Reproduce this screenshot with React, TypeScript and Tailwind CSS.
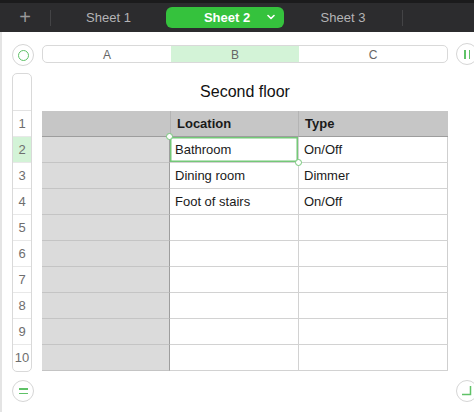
import React from 'react';

const rows = [
  { loc: 'Bathroom', type: 'On/Off' },
  { loc: 'Dining room', type: 'Dimmer' },
  { loc: 'Foot of stairs', type: 'On/Off' },
  { loc: '', type: '' },
  { loc: '', type: '' },
  { loc: '', type: '' },
  { loc: '', type: '' },
  { loc: '', type: '' },
  { loc: '', type: '' },
];

const TopBar = () => (
  <div className="h-[32px] bg-[#2c2c2e] border-t-[3px] border-[#1b1b1c] flex items-center text-[13px]">
    <div className="w-[50px] flex justify-center text-[#9a9a9a] text-[20px] font-light leading-none pb-[2px]">+</div>
    <div className="w-px h-[16px] bg-[#444446]" />
    <div className="w-[115px] text-center text-[#b4b4b6] font-medium">Sheet 1</div>
    <div className="w-[118px] h-[21px] rounded-[6px] bg-[#35c23d] flex items-center relative">
      <span className="flex-1 text-center text-white font-bold pl-[4px]">Sheet 2</span>
      <svg className="absolute left-[101px] top-[7px]" width="8" height="6" viewBox="0 0 8 6">
        <path d="M1 1.5 L4 4.5 L7 1.5" fill="none" stroke="#ffffff" strokeWidth="1.6" strokeLinecap="round" strokeLinejoin="round" />
      </svg>
    </div>
    <div className="w-[118px] text-center text-[#b4b4b6] font-medium">Sheet 3</div>
    <div className="w-px h-[16px] bg-[#444446]" />
  </div>
);

const Circle = ({ children }: { children: React.ReactNode }) => (
  <div className="w-[22px] h-[22px] shrink-0 rounded-full border border-[#d6d6d6] bg-white flex items-center justify-center">
    {children}
  </div>
);

export default function App() {
  return (
    <div className="w-[474px] h-[412px] bg-white overflow-hidden font-['Liberation_Sans',Arial,sans-serif] text-[#1a1a1a]">
      <TopBar />
      <div className="flex border-l-2 border-[#e4e4e4] h-[380px]">
        {/* left gutter */}
        <div className="w-[40px] shrink-0 pl-[10px] flex flex-col">
          <div className="mt-[12px]">
            <Circle>
              <div className="w-[11px] h-[11px] rounded-full border-[1.5px] border-[#5fc267]" />
            </Circle>
          </div>
          <div className="mt-[7px] w-[20px] rounded-[5px] border border-[#d9d9d9] flex flex-col overflow-hidden text-[13px] text-[#6e6e6e]">
            <div className="h-[37px] border-b border-[#e2e2e2]" />
            {Array.from({ length: 10 }, (_, i) => (
              <div
                key={i}
                className={`h-[26px] flex items-center justify-center border-b border-[#e8e8e8] last:border-b-0 ${i === 1 ? 'bg-[#d3f3d7]' : ''}`}
              >
                {i + 1}
              </div>
            ))}
          </div>
          <div className="mt-[8px]">
            <Circle>
              <div className="flex flex-col gap-[3px]">
                <div className="w-[9px] h-[1.5px] bg-[#5fc267]" />
                <div className="w-[9px] h-[1.5px] bg-[#5fc267]" />
              </div>
            </Circle>
          </div>
        </div>

        {/* sheet */}
        <div className="w-[406px] shrink-0 flex flex-col">
          <div className="mt-[13px] h-[18px] rounded-[5px] border border-[#d9d9d9] grid grid-cols-[128px_128px_1fr] text-[12px] text-[#666] overflow-hidden">
            <div className="flex items-center justify-center">A</div>
            <div className="flex items-center justify-center bg-[#d3f3d7]">B</div>
            <div className="flex items-center justify-center">C</div>
          </div>
          <div className="h-[48px] flex items-center justify-center text-[16px] text-[#111] pt-[9px]">Second floor</div>
          <div className="grid grid-cols-[128px_128px_150px] text-[13px] border-r border-[#cfcfcf]">
            <div className="h-[26px] bg-[#c6c6c6] border-b border-[#9d9d9d]" />
            <div className="h-[26px] bg-[#c6c6c6] border-b border-l border-[#9d9d9d] border-l-[#b4b4b4] font-bold flex items-center px-[6px]">Location</div>
            <div className="h-[26px] bg-[#c6c6c6] border-b border-l border-[#9d9d9d] border-l-[#b4b4b4] font-bold flex items-center px-[6px]">Type</div>
            {rows.map((r, i) => (
              <React.Fragment key={i}>
                <div className="h-[26px] bg-[#dbdbdb] border-b border-[#c4c4c4] border-r border-r-[#9e9e9e]" />
                <div className={`h-[26px] border-b border-[#d2d2d2] flex items-center px-[5px] relative ${i === 0 ? 'ring-[1.5px] ring-inset ring-[#74c878]' : ''}`}>
                  {r.loc}
                  {i === 0 && (
                    <>
                      <span className="absolute -left-[4px] -top-[4px] w-[7px] h-[7px] rounded-full bg-white border-[1.5px] border-[#74c878]" />
                      <span className="absolute -right-[4px] -bottom-[4px] w-[7px] h-[7px] rounded-full bg-white border-[1.5px] border-[#74c878] z-10" />
                    </>
                  )}
                </div>
                <div className="h-[26px] border-b border-l border-[#d2d2d2] flex items-center px-[5px]">{r.type}</div>
              </React.Fragment>
            ))}
          </div>
        </div>

        {/* right edge */}
        <div className="pl-[8px] shrink-0 flex flex-col justify-between pb-[10px]">
          <div className="mt-[11px]">
            <Circle>
              <div className="flex gap-[3px]">
                <div className="w-[1.5px] h-[9px] bg-[#5fc267]" />
                <div className="w-[1.5px] h-[9px] bg-[#5fc267]" />
              </div>
            </Circle>
          </div>
          <Circle>
            <svg width="12" height="12" viewBox="0 0 12 12">
              <path d="M1 9.5 H9.5 V1" fill="none" stroke="#5fc267" strokeWidth="1.5" />
            </svg>
          </Circle>
        </div>
      </div>
    </div>
  );
}
